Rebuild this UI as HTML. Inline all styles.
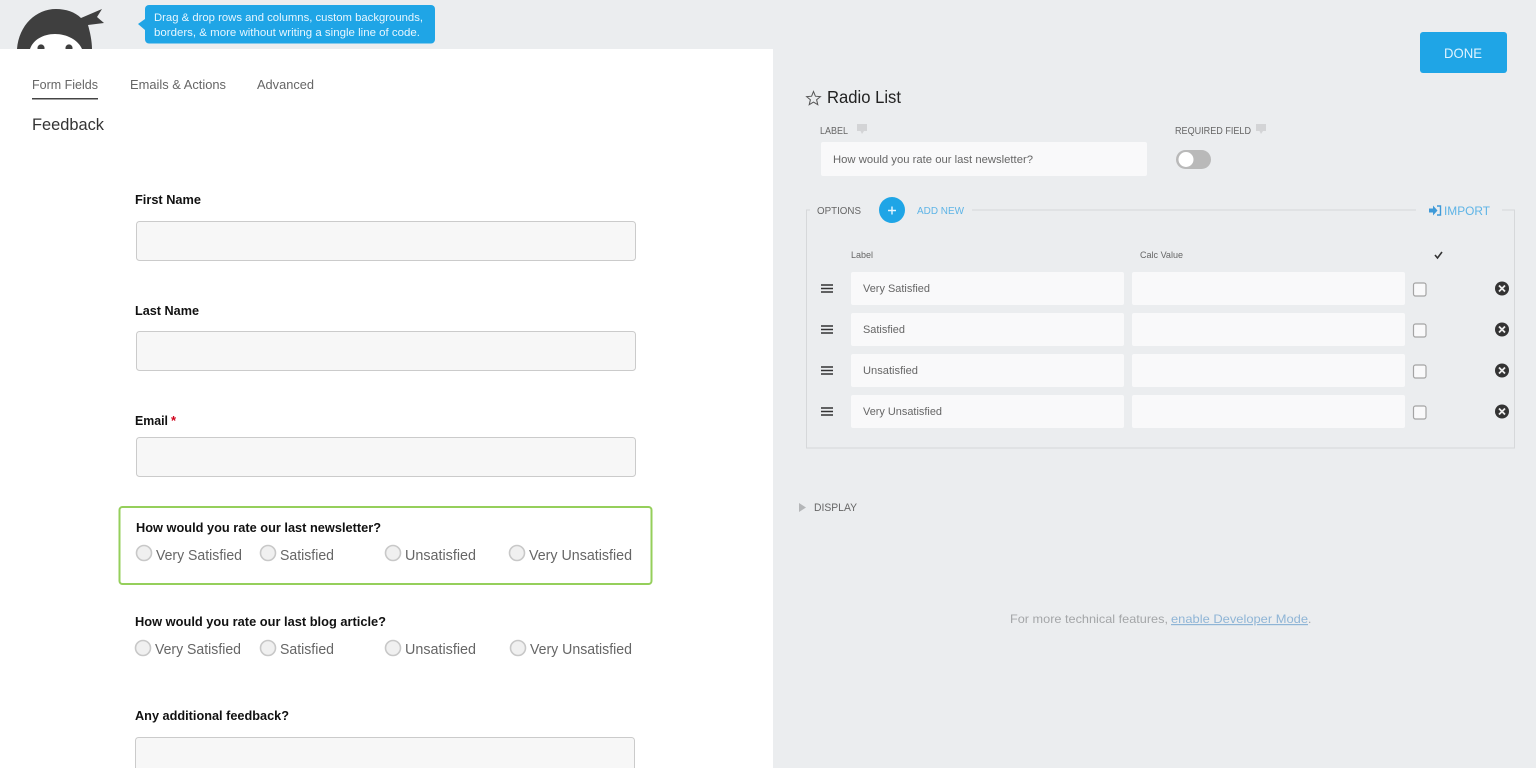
<!DOCTYPE html>
<html lang="en">
<head>
<meta charset="utf-8">
<title>Form Builder</title>
<style>
html,body{margin:0;padding:0;width:1536px;height:768px;overflow:hidden;background:#ebedef}
svg{display:block;filter:blur(.35px)}
text{font-family:"Liberation Sans",sans-serif;white-space:pre}
.b{font-weight:bold;fill:#111;font-size:13px}
.r{font-size:15px;fill:#666}
.t{font-size:13px;fill:#666}
.s{font-size:11px;fill:#666}
.h{font-size:10px;fill:#666}
.in{fill:#f7f7f7;stroke:#cbcbcb;stroke-width:1}
.ra{fill:#f0f0f0;stroke:#c8c8c8;stroke-width:1.6}
.o{fill:#f9f9fa}
.cb{fill:#f9f9fa;stroke:#a4a4a4;stroke-width:1.2}
</style>
</head>
<body>
<svg width="1536" height="768" viewBox="0 0 1536 768" xmlns="http://www.w3.org/2000/svg">
<rect width="1536" height="768" fill="#ebedef"/>

<!-- logo -->
<path d="M17 49C19 25 36 9 56 9C66 9 75 12 81 18L102 9L97 17L104 23L88 25C90 32 92 41 92 49Z" fill="#3f3f3f"/>
<path d="M30 49C33 40 43 34 55 34C67 34 78 40 82 49Z" fill="#fff"/>
<circle cx="41" cy="48" r="3.600" fill="#3f3f3f"/>
<circle cx="69" cy="48" r="3.600" fill="#3f3f3f"/>

<!-- tooltip -->
<path d="M145 19L138 24L145 30Z" fill="#1fa5e6"/>
<rect x="145" y="5" width="290" height="38.500" rx="4" fill="#1fa5e6"/>
<text x="154" y="21" font-size="11" fill="#e6f6ff" textLength="269" lengthAdjust="spacingAndGlyphs">Drag &amp; drop rows and columns, custom backgrounds,</text>
<text x="154" y="36" font-size="11" fill="#e6f6ff" textLength="266" lengthAdjust="spacingAndGlyphs">borders, &amp; more without writing a single line of code.</text>

<!-- left panel -->
<rect x="0" y="49" width="773" height="719" fill="#fff"/>
<text x="32" y="89" class="t" textLength="66" lengthAdjust="spacingAndGlyphs">Form Fields</text>
<rect x="32" y="98" width="66" height="1.500" fill="#444"/>
<text x="130" y="89" class="t" textLength="96" lengthAdjust="spacingAndGlyphs">Emails &amp; Actions</text>
<text x="257" y="89" class="t" textLength="57" lengthAdjust="spacingAndGlyphs">Advanced</text>
<text x="32" y="130" font-size="17" fill="#333" textLength="72" lengthAdjust="spacingAndGlyphs">Feedback</text>

<text x="135" y="204" class="b" textLength="66" lengthAdjust="spacingAndGlyphs">First Name</text>
<rect x="136.500" y="221.500" width="499" height="39" rx="3" class="in"/>
<text x="135" y="315" class="b" textLength="64" lengthAdjust="spacingAndGlyphs">Last Name</text>
<rect x="136.500" y="331.500" width="499" height="39" rx="3" class="in"/>
<text x="135" y="425" class="b" textLength="33" lengthAdjust="spacingAndGlyphs">Email</text>
<text x="171" y="425" font-size="13" font-weight="bold" fill="#d0021b">*</text>
<rect x="136.500" y="437.500" width="499" height="39" rx="3" class="in"/>

<rect x="119.500" y="507" width="532" height="77" rx="3" fill="#fff" stroke="#95cf5b" stroke-width="2"/>
<text x="136" y="532" class="b" textLength="245" lengthAdjust="spacingAndGlyphs">How would you rate our last newsletter?</text>
<circle cx="144" cy="553" r="7.500" class="ra"/>
<text x="156" y="560" class="r" textLength="86" lengthAdjust="spacingAndGlyphs">Very Satisfied</text>
<circle cx="268" cy="553" r="7.500" class="ra"/>
<text x="280" y="560" class="r" textLength="54" lengthAdjust="spacingAndGlyphs">Satisfied</text>
<circle cx="393" cy="553" r="7.500" class="ra"/>
<text x="405" y="560" class="r" textLength="71" lengthAdjust="spacingAndGlyphs">Unsatisfied</text>
<circle cx="517" cy="553" r="7.500" class="ra"/>
<text x="529" y="560" class="r" textLength="103" lengthAdjust="spacingAndGlyphs">Very Unsatisfied</text>

<text x="135" y="626" class="b" textLength="251" lengthAdjust="spacingAndGlyphs">How would you rate our last blog article?</text>
<circle cx="143" cy="648" r="7.500" class="ra"/>
<text x="155" y="654" class="r" textLength="86" lengthAdjust="spacingAndGlyphs">Very Satisfied</text>
<circle cx="268" cy="648" r="7.500" class="ra"/>
<text x="280" y="654" class="r" textLength="54" lengthAdjust="spacingAndGlyphs">Satisfied</text>
<circle cx="393" cy="648" r="7.500" class="ra"/>
<text x="405" y="654" class="r" textLength="71" lengthAdjust="spacingAndGlyphs">Unsatisfied</text>
<circle cx="518" cy="648" r="7.500" class="ra"/>
<text x="530" y="654" class="r" textLength="102" lengthAdjust="spacingAndGlyphs">Very Unsatisfied</text>

<text x="135" y="720" class="b" textLength="154" lengthAdjust="spacingAndGlyphs">Any additional feedback?</text>
<rect x="135.500" y="737.500" width="499" height="60" rx="3" class="in"/>

<!-- right panel -->
<rect x="1420" y="32" width="87" height="41" rx="3" fill="#1fa5e6"/>
<text x="1444" y="58" font-size="14" fill="#dff3ff" textLength="38" lengthAdjust="spacingAndGlyphs">DONE</text>

<path d="M813.500 91.500L815.400 96.200L820.400 96.600L816.600 99.800L817.800 104.700L813.500 102.100L809.200 104.700L810.400 99.800L806.600 96.600L811.600 96.200Z" fill="none" stroke="#555" stroke-width="1"/>
<text x="827" y="103" font-size="17.500" fill="#222" textLength="74" lengthAdjust="spacingAndGlyphs">Radio List</text>

<text x="820" y="134" class="h" textLength="28" lengthAdjust="spacingAndGlyphs">LABEL</text>
<path d="M857 124H867V131H864L862 134L860.500 131H857Z" fill="#d3d4d6"/>
<text x="1175" y="134" class="h" textLength="76" lengthAdjust="spacingAndGlyphs">REQUIRED FIELD</text>
<path d="M1256 124H1266V131H1263L1261 134L1259.500 131H1256Z" fill="#d3d4d6"/>

<rect x="821" y="142" width="326" height="34" rx="2" class="o"/>
<text x="833" y="163" class="s" textLength="200" lengthAdjust="spacingAndGlyphs">How would you rate our last newsletter?</text>
<rect x="1176" y="150" width="35" height="19" rx="9.500" fill="#b9b9b9"/>
<circle cx="1186" cy="159.500" r="7.500" fill="#fff"/>

<!-- options fieldset -->
<path d="M810 210H806.500V448H1514.500V210H1502M972 210H1416" fill="none" stroke="#d6d8da" stroke-width="1"/>
<text x="817" y="214" class="h" textLength="44" lengthAdjust="spacingAndGlyphs">OPTIONS</text>
<circle cx="892" cy="210" r="13" fill="#1fa5e6"/>
<path d="M888 210.500H896M892 206.500V214.500" stroke="#e6f6ff" stroke-width="1.400"/>
<text x="917" y="214" class="h" style="fill:#5eb4e6" textLength="47" lengthAdjust="spacingAndGlyphs">ADD NEW</text>
<path d="M1429 208.500H1433V205.500L1437.500 210.500L1433 215.500V212.500H1429Z" fill="#3f9ad8"/>
<path d="M1437 206H1440.500V215H1437" fill="none" stroke="#3f9ad8" stroke-width="1.400"/>
<text x="1444" y="215" font-size="12" fill="#5eb4e6" textLength="46" lengthAdjust="spacingAndGlyphs">IMPORT</text>

<text x="851" y="258" font-size="9" fill="#666" textLength="22" lengthAdjust="spacingAndGlyphs">Label</text>
<text x="1140" y="258" font-size="9" fill="#666" textLength="43" lengthAdjust="spacingAndGlyphs">Calc Value</text>
<path d="M1435 255L1437.500 258L1442 252" fill="none" stroke="#333" stroke-width="1.600"/>

<!-- row 1 -->
<g>
<path d="M821 285H833M821 288.500H833M821 292H833" stroke="#333" stroke-width="1.500"/>
<rect x="851" y="272" width="273" height="33" rx="2" class="o"/>
<text x="863" y="292" class="s" textLength="67" lengthAdjust="spacingAndGlyphs">Very Satisfied</text>
<rect x="1132" y="272" width="273" height="33" rx="2" class="o"/>
<rect x="1413.500" y="283" width="12.500" height="13" rx="2" class="cb"/>
<circle cx="1502" cy="288.500" r="7" fill="#333"/>
<path d="M1499 285.500L1505 291.500M1505 285.500L1499 291.500" stroke="#eee" stroke-width="1.800"/>
</g>
<!-- row 2 -->
<g>
<path d="M821 326H833M821 329.500H833M821 333H833" stroke="#333" stroke-width="1.500"/>
<rect x="851" y="313" width="273" height="33" rx="2" class="o"/>
<text x="863" y="333" class="s" textLength="42" lengthAdjust="spacingAndGlyphs">Satisfied</text>
<rect x="1132" y="313" width="273" height="33" rx="2" class="o"/>
<rect x="1413.500" y="324" width="12.500" height="13" rx="2" class="cb"/>
<circle cx="1502" cy="329.500" r="7" fill="#333"/>
<path d="M1499 326.500L1505 332.500M1505 326.500L1499 332.500" stroke="#eee" stroke-width="1.800"/>
</g>
<!-- row 3 -->
<g>
<path d="M821 367H833M821 370.500H833M821 374H833" stroke="#333" stroke-width="1.500"/>
<rect x="851" y="354" width="273" height="33" rx="2" class="o"/>
<text x="863" y="374" class="s" textLength="55" lengthAdjust="spacingAndGlyphs">Unsatisfied</text>
<rect x="1132" y="354" width="273" height="33" rx="2" class="o"/>
<rect x="1413.500" y="365" width="12.500" height="13" rx="2" class="cb"/>
<circle cx="1502" cy="370.500" r="7" fill="#333"/>
<path d="M1499 367.500L1505 373.500M1505 367.500L1499 373.500" stroke="#eee" stroke-width="1.800"/>
</g>
<!-- row 4 -->
<g>
<path d="M821 408H833M821 411.500H833M821 415H833" stroke="#333" stroke-width="1.500"/>
<rect x="851" y="395" width="273" height="33" rx="2" class="o"/>
<text x="863" y="415" class="s" textLength="79" lengthAdjust="spacingAndGlyphs">Very Unsatisfied</text>
<rect x="1132" y="395" width="273" height="33" rx="2" class="o"/>
<rect x="1413.500" y="406" width="12.500" height="13" rx="2" class="cb"/>
<circle cx="1502" cy="411.500" r="7" fill="#333"/>
<path d="M1499 408.500L1505 414.500M1505 408.500L1499 414.500" stroke="#eee" stroke-width="1.800"/>
</g>

<path d="M799 503L806 507.500L799 512Z" fill="#b4b6b8"/>
<text x="814" y="511" font-size="11" fill="#666" textLength="43" lengthAdjust="spacingAndGlyphs">DISPLAY</text>

<text x="1010" y="623" font-size="12" fill="#a4a6a8" textLength="158" lengthAdjust="spacingAndGlyphs">For more technical features,</text>
<text x="1171" y="623" font-size="12" fill="#8fb5d6" text-decoration="underline" textLength="137" lengthAdjust="spacingAndGlyphs">enable Developer Mode</text>
<text x="1308" y="623" font-size="12" fill="#a4a6a8">.</text>
</svg>
</body>
</html>
